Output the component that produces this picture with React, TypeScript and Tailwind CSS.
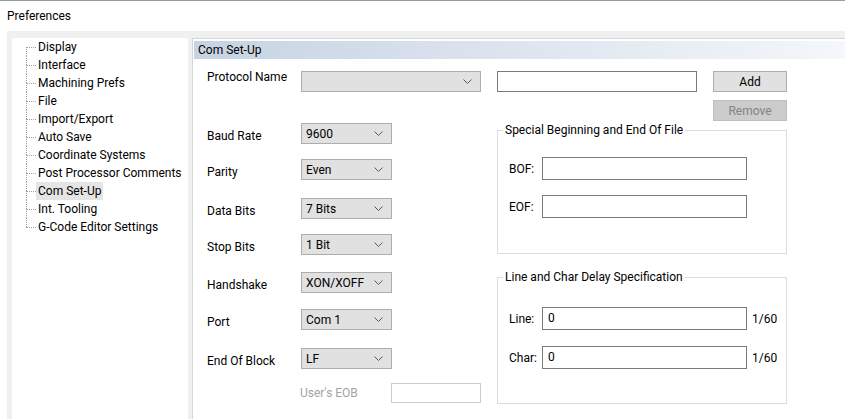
import React from 'react';

const treeItems = [
  'Display',
  'Interface',
  'Machining Prefs',
  'File',
  'Import/Export',
  'Auto Save',
  'Coordinate Systems',
  'Post Processor Comments',
  'Com Set-Up',
  'Int. Tooling',
  'G-Code Editor Settings',
];

const Chevron = () => (
  <svg width="9" height="5" viewBox="0 0 9 5" className="shrink-0">
    <polyline points="0.5,0.5 4.5,4.5 8.5,0.5" fill="none" stroke="#5a5a5a" strokeWidth="1" />
  </svg>
);

function Select({ value, className }: { value: string; className: string }) {
  return (
    <div
      className={`flex items-center justify-between h-[21px] border border-[#adadad] bg-[#e1e1e1] pl-[4px] pr-[8px] text-black ${className}`}
    >
      <span>{value}</span>
      <Chevron />
    </div>
  );
}

const leftRows = [
  { label: 'Baud Rate', value: '9600', mt: 'mt-[31px]' },
  { label: 'Parity', value: 'Even', mt: 'mt-[15px]' },
  { label: 'Data Bits', value: '7 Bits', mt: 'mt-[18px]' },
  { label: 'Stop Bits', value: '1 Bit', mt: 'mt-[15px]' },
  { label: 'Handshake', value: 'XON/XOFF', mt: 'mt-[17px]' },
  { label: 'Port', value: 'Com 1', mt: 'mt-[16px]' },
  { label: 'End Of Block', value: 'LF', mt: 'mt-[18px]' },
];

export default function App() {
  return (
    <div className="w-[845px] h-[419px] bg-white overflow-hidden flex flex-col text-[12px] leading-[16px] font-normal text-black font-[Roboto,sans-serif]">
      {/* Title */}
      <div className="h-[31px] shrink-0 border-t border-[#9c9c9c] flex items-center pl-[7px] pb-[1px]">
        Preferences
      </div>

      {/* Body */}
      <div className="flex-1 ml-[7px] bg-[#f0f0f0] pt-[7px] pl-[5px] flex gap-[4px] min-h-0">
        {/* Tree */}
        <div className="w-[176px] bg-white pl-[14px]">
          {treeItems.map((item, i) => (
            <div key={item} className="flex h-[18px] items-stretch">
              <div className="flex flex-col w-[10px] shrink-0">
                <div
                  className={
                    i > 0
                      ? 'h-[9px] border-l border-dotted border-[#a0a0a0]'
                      : 'h-[9px]'
                  }
                />
                <div
                  className={
                    i < treeItems.length - 1
                      ? 'h-[9px] border-l border-t border-dotted border-[#a0a0a0]'
                      : 'h-[9px] border-t border-dotted border-[#a0a0a0]'
                  }
                />
              </div>
              <div
                className={
                  item === 'Com Set-Up'
                    ? 'flex items-center px-[2px] bg-[#e5e5e5]'
                    : 'flex items-center px-[2px]'
                }
              >
                {item}
              </div>
            </div>
          ))}
        </div>

        {/* Right panel */}
        <div className="flex-1 bg-white border-l border-t border-[#d6d6d6] pt-[2px] pl-[1px]">
          <div className="h-[18px] flex items-center pl-[4px] bg-linear-to-r from-[#c7d3e3] to-[#f4f7fb]">
            Com Set-Up
          </div>

          <div className="pl-[13px]">
            {/* Protocol row */}
            <div className="flex items-start mt-[10px]">
              <div className="w-[94px] h-[16px]">Protocol Name</div>
              <Select value="" className="w-[180px] mt-[2px] bg-[#e0e0e0]" />
              <div className="w-[200px] h-[21px] ml-[16px] mt-[2px] border border-[#7a7a7a] bg-white" />
              <button className="w-[74px] h-[21px] ml-[16px] mt-[2px] border border-[#adadad] bg-[#e1e1e1] text-black flex items-center justify-center">
                Add
              </button>
            </div>

            <div className="flex">
              {/* Left column */}
              <div className="w-[274px] flex flex-col">
                {leftRows.map((r) => (
                  <div key={r.label} className={`flex items-center ${r.mt}`}>
                    <div className="w-[94px] pt-[4px]">{r.label}</div>
                    <Select value={r.value} className="w-[91px]" />
                  </div>
                ))}
                <div className="flex items-center mt-[14px]">
                  <div className="w-[93px]" />
                  <div className="w-[91px] text-[#a3a3a3]">User's EOB</div>
                  <div className="w-[90px] h-[20px] border border-[#cccccc] bg-white" />
                </div>
              </div>

              {/* Right column */}
              <div className="w-[290px] ml-[16px] flex flex-col">
                <button className="self-end w-[74px] h-[21px] mt-[8px] border border-[#bfbfbf] bg-[#cccccc] text-[#838383] flex items-center justify-center">
                  Remove
                </button>

                <fieldset className="mt-[1px] border border-[#dcdcdc] pb-[35px]">
                  <legend className="ml-[5px] px-[2px] leading-[16px]">Special Beginning and End Of File</legend>
                  <div className="pl-[11px]">
                    <div className="flex items-center mt-[19px]">
                      <div className="w-[33px]">BOF:</div>
                      <div className="w-[205px] h-[23px] border border-[#7a7a7a] bg-white" />
                    </div>
                    <div className="flex items-center mt-[15px]">
                      <div className="w-[33px]">EOF:</div>
                      <div className="w-[205px] h-[23px] border border-[#7a7a7a] bg-white" />
                    </div>
                  </div>
                </fieldset>

                <fieldset className="mt-[15px] border border-[#dcdcdc] pb-[34px]">
                  <legend className="ml-[5px] px-[2px] leading-[16px]">Line and Char Delay Specification</legend>
                  <div className="pl-[11px]">
                    <div className="flex items-center mt-[22px]">
                      <div className="w-[33px]">Line:</div>
                      <div className="w-[205px] h-[23px] border border-[#7a7a7a] bg-white flex items-center pl-[5px] pb-[2px]">
                        0
                      </div>
                      <div className="ml-[5px]">1/60</div>
                    </div>
                    <div className="flex items-center mt-[16px]">
                      <div className="w-[33px]">Char:</div>
                      <div className="w-[205px] h-[23px] border border-[#7a7a7a] bg-white flex items-center pl-[5px] pb-[2px]">
                        0
                      </div>
                      <div className="ml-[5px]">1/60</div>
                    </div>
                  </div>
                </fieldset>
              </div>
            </div>
          </div>
        </div>
      </div>
    </div>
  );
}
